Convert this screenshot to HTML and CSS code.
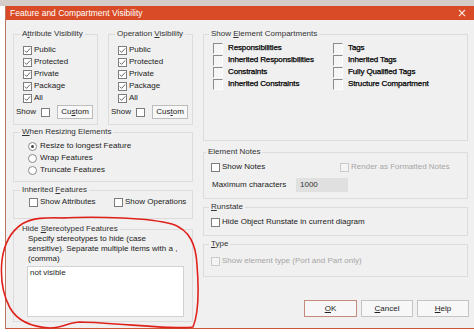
FILE: index.html
```html
<!DOCTYPE html>
<html lang="en">
<head>
  <meta charset="UTF-8">
  <title>Feature and Compartment Visibility</title>
  <link rel="stylesheet" href="styles.css">
</head>
<body>

<div class="top-strip"></div>

<div class="window">

  <!-- Title bar -->
  <div class="titlebar">
    <span class="title">Feature and Compartment Visibility</span>
    <svg class="close" width="8" height="8" viewBox="0 0 8 8"><path d="M1 1 L7 7 M7 1 L1 7" stroke="#fbe1d8" stroke-width="1.1"/></svg>
  </div>

  <div class="dialog">

    <!-- Left column -->
    <div class="col-left">
      <div class="vis-row">
        <fieldset class="group vis">
          <legend>A<u>t</u>tribute Visibility</legend>
          <div class="inner">
            <div class="check"><span class="box"><svg width="7" height="7" viewBox="0 0 7 7"><path d="M0.8 3.6 L2.6 5.4 L6.2 1.4" fill="none" stroke="#555" stroke-width="0.9"/></svg></span>Public</div>
            <div class="check"><span class="box"><svg width="7" height="7" viewBox="0 0 7 7"><path d="M0.8 3.6 L2.6 5.4 L6.2 1.4" fill="none" stroke="#555" stroke-width="0.9"/></svg></span>Protected</div>
            <div class="check"><span class="box"><svg width="7" height="7" viewBox="0 0 7 7"><path d="M0.8 3.6 L2.6 5.4 L6.2 1.4" fill="none" stroke="#555" stroke-width="0.9"/></svg></span>Private</div>
            <div class="check"><span class="box"><svg width="7" height="7" viewBox="0 0 7 7"><path d="M0.8 3.6 L2.6 5.4 L6.2 1.4" fill="none" stroke="#555" stroke-width="0.9"/></svg></span>Package</div>
            <div class="check"><span class="box"><svg width="7" height="7" viewBox="0 0 7 7"><path d="M0.8 3.6 L2.6 5.4 L6.2 1.4" fill="none" stroke="#555" stroke-width="0.9"/></svg></span>All</div>
            <div class="show-row">
              <span>Show</span><span class="box"></span><button class="small-btn">Cu<u>s</u>tom</button>
            </div>
          </div>
        </fieldset>

        <fieldset class="group vis">
          <legend>Operation <u>V</u>isibility</legend>
          <div class="inner">
            <div class="check"><span class="box"><svg width="7" height="7" viewBox="0 0 7 7"><path d="M0.8 3.6 L2.6 5.4 L6.2 1.4" fill="none" stroke="#555" stroke-width="0.9"/></svg></span>Public</div>
            <div class="check"><span class="box"><svg width="7" height="7" viewBox="0 0 7 7"><path d="M0.8 3.6 L2.6 5.4 L6.2 1.4" fill="none" stroke="#555" stroke-width="0.9"/></svg></span>Protected</div>
            <div class="check"><span class="box"><svg width="7" height="7" viewBox="0 0 7 7"><path d="M0.8 3.6 L2.6 5.4 L6.2 1.4" fill="none" stroke="#555" stroke-width="0.9"/></svg></span>Private</div>
            <div class="check"><span class="box"><svg width="7" height="7" viewBox="0 0 7 7"><path d="M0.8 3.6 L2.6 5.4 L6.2 1.4" fill="none" stroke="#555" stroke-width="0.9"/></svg></span>Package</div>
            <div class="check"><span class="box"><svg width="7" height="7" viewBox="0 0 7 7"><path d="M0.8 3.6 L2.6 5.4 L6.2 1.4" fill="none" stroke="#555" stroke-width="0.9"/></svg></span>All</div>
            <div class="show-row">
              <span>Show</span><span class="box"></span><button class="small-btn">Cus<u>t</u>om</button>
            </div>
          </div>
        </fieldset>
      </div>

      <fieldset class="group resize">
        <legend><u>W</u>hen Resizing Elements</legend>
        <div class="inner">
          <div class="radio"><span class="dot on"></span>Resize to longest Feature</div>
          <div class="radio"><span class="dot"></span>Wrap Features</div>
          <div class="radio"><span class="dot"></span>Truncate Features</div>
        </div>
      </fieldset>

      <fieldset class="group inherited">
        <legend>Inherited <u>F</u>eatures</legend>
        <div class="inner">
          <div class="check first"><span class="box"></span>Show Attributes</div>
          <div class="check"><span class="box"></span>Show Operations</div>
        </div>
      </fieldset>

      <fieldset class="group stereo">
        <legend>Hide <u>S</u>tereotyped Features</legend>
        <div class="inner">
          <p class="hint">Specify stereotypes to hide (case<br>sensitive). Separate multiple items with a ,<br>(comma)</p>
          <textarea class="textbox" readonly>not visible</textarea>
        </div>
      </fieldset>
    </div>

    <!-- Right column -->
    <div class="col-right">
      <fieldset class="group compart">
        <legend>Show <u>E</u>lement Compartments</legend>
        <div class="inner">
          <div class="citem"><span class="box3d"></span>Responsibilities</div>
          <div class="citem"><span class="box3d"></span>Tags</div>
          <div class="citem"><span class="box3d"></span>Inherited Responsibilities</div>
          <div class="citem"><span class="box3d"></span>Inherited Tags</div>
          <div class="citem"><span class="box3d"></span>Constraints</div>
          <div class="citem"><span class="box3d"></span>Fully Qualified Tags</div>
          <div class="citem"><span class="box3d"></span>Inherited Constraints</div>
          <div class="citem"><span class="box3d"></span>Structure Compartment</div>
        </div>
      </fieldset>

      <fieldset class="group notes">
        <legend>Element Notes</legend>
        <div class="inner">
          <div class="notes-row">
            <div class="check first"><span class="box"></span>Show Notes</div>
            <div class="check disabled"><span class="box"></span>Render as Formatted Notes</div>
          </div>
          <div class="max-row">
            <span class="max-label">Maximum characters</span>
            <span class="num-input">1000</span>
          </div>
        </div>
      </fieldset>

      <fieldset class="group runstate">
        <legend><u>R</u>unstate</legend>
        <div class="inner">
          <div class="check"><span class="box"></span>Hide Object Runstate in current diagram</div>
        </div>
      </fieldset>

      <fieldset class="group type">
        <legend><u>T</u>ype</legend>
        <div class="inner">
          <div class="check disabled"><span class="box"></span>Show element type (Port and Part only)</div>
        </div>
      </fieldset>

      <div class="buttons">
        <button class="btn default"><u>O</u>K</button>
        <button class="btn"><u>C</u>ancel</button>
        <button class="btn"><u>H</u>elp</button>
      </div>
    </div>

  </div>
</div>

<!-- Hand-drawn annotation over the dialog -->
<svg class="markup" width="474" height="332" viewBox="0 0 474 332">
  <path d="M60 218 C100 216, 150 218, 172 224 C190 230, 196 245, 197 265 C199 290, 198 315, 193 327 C175 330, 120 323, 80 322 C70 322, 62 328, 50 328 C30 327, 17 320, 10 308 C4 297, 0 280, 2 260 C4 245, 10 232, 22 224 C32 218, 45 217, 66 218" fill="none" stroke="#e0221c" stroke-width="1.6" stroke-linecap="round"/>
</svg>

</body>
</html>
```

FILE: styles.css
```css
* {
  box-sizing: border-box;
}

body {
  margin: 0;
  width: 474px;
  height: 332px;
  overflow: hidden;
  position: relative;
  background: #fff;
  font-family: "Liberation Sans", Arial, sans-serif;
  font-size: 8px;
  line-height: 10px;
  color: #222;
}

u {
  text-decoration-thickness: 1px;
  text-underline-offset: 1px;
}

.top-strip {
  height: 6px;
  background: #d5ccc9;
}

/* Window frame */
.window {
  margin-left: 5px;
  border-left: 1px solid #b9785f;
  border-bottom: 1px solid #c8553a;
}

.titlebar {
  height: 14px;
  background: #d84b26;
  color: #fff;
  display: flex;
  align-items: center;
  justify-content: space-between;
  padding: 0 8px 0 4px;
  font-size: 8.5px;
}

.close {
  display: block;
}

.dialog {
  height: 308px;
  background: #f0f0f0;
  display: flex;
  gap: 10px;
  padding: 9px 0 0 7px;
}

.col-left {
  width: 180px;
  display: flex;
  flex-direction: column;
}

.col-right {
  width: 265px;
  display: flex;
  flex-direction: column;
}

/* Group boxes */
.group {
  margin: 0;
  padding: 0;
  min-width: 0;
  border: 1px solid #dcdcdc;
}

.group legend {
  padding: 0 2px;
  margin-left: 6px;
  line-height: 10px;
  color: #333;
}

/* Checkboxes and radios */
.check {
  display: flex;
  align-items: center;
  gap: 2px;
  height: 12px;
  white-space: nowrap;
}

.box {
  width: 9px;
  height: 9px;
  border: 1px solid #7d7d7d;
  background: #fff;
  display: flex;
  align-items: center;
  justify-content: center;
  flex: none;
}

.check.disabled {
  color: #a6a6a6;
}

.check.disabled .box {
  border-color: #cacaca;
  background: #f4f4f4;
}

.radio {
  display: flex;
  align-items: center;
  gap: 3px;
  height: 12px;
}

.dot {
  width: 9px;
  height: 9px;
  border: 1px solid #8a8a8a;
  border-radius: 50%;
  background: #fff;
  display: flex;
  align-items: center;
  justify-content: center;
}

.dot.on::after {
  content: "";
  width: 3px;
  height: 3px;
  border-radius: 50%;
  background: #444;
}

/* Attribute / Operation visibility */
.vis-row {
  display: flex;
  gap: 10px;
}

.vis {
  width: 85px;
  height: 96px;
}

.vis .inner {
  padding: 5px 0 0 9px;
}

.show-row {
  display: flex;
  align-items: center;
  height: 14px;
  margin: 1px 0 0 -7px;
}

.show-row .box {
  margin-left: 5px;
}

.small-btn {
  margin-left: 7px;
  width: 36px;
  height: 14px;
  padding: 0;
  font: inherit;
  color: #222;
  background: #f8f8f8;
  border: 1px solid #bdbdbd;
}

/* When resizing */
.resize {
  margin-top: 2px;
  height: 55px;
}

.resize .inner {
  padding: 3px 0 0 14px;
}

/* Inherited features */
.inherited {
  margin-top: 3px;
  height: 34px;
}

.inherited .inner {
  display: flex;
  padding: 1px 0 0 15px;
}

.inherited .first {
  width: 85px;
}

/* Hide stereotyped features */
.stereo {
  margin-top: 5px;
  height: 98px;
}

.stereo .inner {
  padding: 0 0 0 14px;
}

.hint {
  margin: 0;
  white-space: nowrap;
}

.textbox {
  display: block;
  margin: 2px 0 0 -1px;
  width: 157px;
  height: 51px;
  padding: 1px 2px;
  font: inherit;
  color: #222;
  background: #fff;
  border: 1px solid #d2d2d2;
  resize: none;
  outline: none;
  overflow: hidden;
}

/* Show element compartments */
.compart {
  height: 112px;
}

.compart legend {
  margin-left: 5px;
}

.compart .inner {
  display: grid;
  grid-template-columns: 120px auto;
  padding: 3px 0 0 9px;
}

.citem {
  display: flex;
  align-items: center;
  gap: 5px;
  height: 12px;
  color: #000;
  letter-spacing: -0.12px;
  -webkit-text-stroke: 0.25px #000;
  white-space: nowrap;
}

.box3d {
  width: 10px;
  height: 11px;
  border-top: 1px solid #8c8c8c;
  border-left: 1px solid #8c8c8c;
  border-right: 1px solid #fdfdfd;
  border-bottom: 1px solid #fdfdfd;
  background: #f6f6f6;
}

/* Element notes */
.notes {
  margin-top: 6px;
  height: 52px;
}

.notes legend {
  margin-left: 2px;
}

.notes .inner {
  padding: 4px 0 0 7px;
}

.notes-row {
  display: flex;
}

.notes-row .first {
  width: 129px;
}

.max-row {
  display: flex;
  align-items: center;
  height: 14px;
  margin-top: 5px;
}

.max-label {
  width: 84px;
  margin-left: 1px;
}

.num-input {
  width: 52px;
  height: 14px;
  line-height: 14px;
  padding-left: 4px;
  background: #e0e0e0;
  color: #333;
}

/* Runstate and type */
.runstate {
  margin-top: 3px;
  height: 34px;
}

.runstate legend,
.type legend {
  margin-left: 5px;
}

.runstate .inner {
  padding: 4px 0 0 7px;
}

.type {
  margin-top: 3px;
  height: 38px;
}

.type .inner {
  padding: 6px 0 0 7px;
}

/* Dialog buttons */
.buttons {
  display: flex;
  justify-content: flex-end;
  gap: 4px;
  margin: 23px -1px 0 0;
}

.btn {
  width: 52px;
  height: 17px;
  padding: 0;
  font: inherit;
  color: #222;
  background: #f7f7f7;
  border: 1px solid #c4c4c4;
}

.btn.default {
  width: 53px;
  border-color: #c48a7c;
}

/* Red pen annotation */
.markup {
  position: absolute;
  left: 0;
  top: 0;
  pointer-events: none;
}
```
